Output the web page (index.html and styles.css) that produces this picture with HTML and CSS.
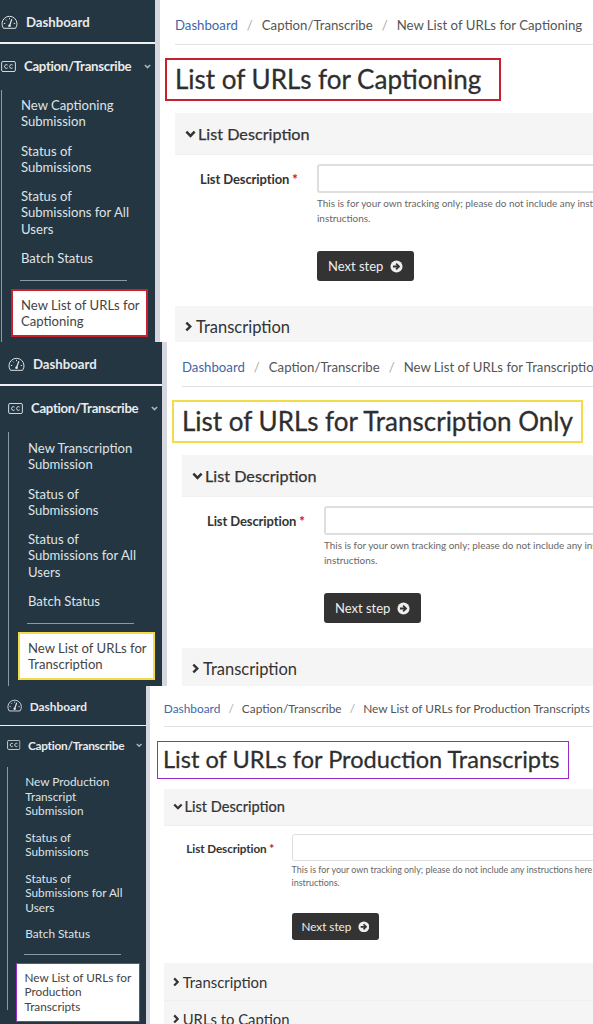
FILE: index.html
```html
<!DOCTYPE html>
<html lang="en">
<head>
  <meta charset="UTF-8">
  <meta name="viewport" content="width=device-width, initial-scale=1.0">
  <title>List of URLs</title>
  <link rel="stylesheet" href="styles.css">
</head>
<body>
  <svg class="sprite" xmlns="http://www.w3.org/2000/svg">
    <symbol id="gauge" viewBox="0 0 18 16">
      <path d="M2.6 14.2A8 8 0 1 1 15.4 14.2Z" fill="none" stroke="currentColor" stroke-width="1"/>
      <path d="M9 11.5 11.5 4.5" stroke="currentColor" stroke-width="1.3"/>
      <circle cx="9" cy="11.5" r="1.4" fill="currentColor"/>
      <path d="M3 9h1.5M13.5 9H15M5 4.8l1 1M9 3v1.5" stroke="currentColor" stroke-width="1"/>
    </symbol>
    <symbol id="cc" viewBox="0 0 16 12">
      <rect x=".5" y=".5" width="15" height="11" rx="1.5" fill="none" stroke="currentColor"/>
      <path d="M7 4.5A2 2 0 1 0 7 7.5M12.5 4.5A2 2 0 1 0 12.5 7.5" fill="none" stroke="currentColor"/>
    </symbol>
    <symbol id="down" viewBox="0 0 12 8">
      <path d="M1.5 1.5 6 6l4.5-4.5" fill="none" stroke="currentColor" stroke-width="2.8"/>
    </symbol>
    <symbol id="right" viewBox="0 0 8 12">
      <path d="M1.5 1.5 6 6l-4.5 4.5" fill="none" stroke="currentColor" stroke-width="2.8"/>
    </symbol>
    <symbol id="go" viewBox="0 0 14 14">
      <circle cx="7" cy="7" r="6.5" fill="currentColor"/>
      <path d="M3.2 7h6M6.6 3.9 9.7 7l-3.1 3.1" fill="none" stroke="#333" stroke-width="1.9"/>
    </symbol>
  </svg>

  <!-- Captioning -->
  <section class="panel panel-captioning">
    <aside class="sidebar">
      <a class="side-link side-dashboard"><svg class="side-icon"><use href="#gauge"/></svg>Dashboard</a>
      <a class="side-link side-group"><svg class="side-icon side-icon-cc"><use href="#cc"/></svg>Caption/Transcribe<svg class="side-caret"><use href="#down"/></svg></a>
      <ul class="tree">
        <li>New Captioning Submission</li>
        <li>Status of Submissions</li>
        <li>Status of Submissions for All Users</li>
        <li class="tree-last">Batch Status</li>
        <li class="tree-current">New List of URLs for Captioning</li>
      </ul>
    </aside>
    <main class="content">
      <nav class="crumbs"><a>Dashboard</a><i>/</i><span>Caption/Transcribe</span><i>/</i><span>New List of URLs for Captioning</span></nav>
      <h1 class="title">List of URLs for Captioning</h1>
      <h2 class="section-head section-open"><svg><use href="#down"/></svg>List Description</h2>
      <div class="form-row">
        <label class="form-label">List Description <b>*</b></label>
        <div class="form-field">
          <input class="form-input" type="text">
          <p class="help">This is for your own tracking only; please do not include any instructions here -<br>instructions.</p>
          <button class="next-btn">Next step<svg><use href="#go"/></svg></button>
        </div>
      </div>
      <h2 class="section-head"><svg class="chev-right"><use href="#right"/></svg>Transcription</h2>
    </main>
  </section>

  <!-- Transcription -->
  <section class="panel panel-transcription">
    <aside class="sidebar">
      <a class="side-link side-dashboard"><svg class="side-icon"><use href="#gauge"/></svg>Dashboard</a>
      <a class="side-link side-group"><svg class="side-icon side-icon-cc"><use href="#cc"/></svg>Caption/Transcribe<svg class="side-caret"><use href="#down"/></svg></a>
      <ul class="tree">
        <li>New Transcription Submission</li>
        <li>Status of Submissions</li>
        <li>Status of Submissions for All Users</li>
        <li class="tree-last">Batch Status</li>
        <li class="tree-current">New List of URLs for Transcription</li>
      </ul>
    </aside>
    <main class="content">
      <nav class="crumbs"><a>Dashboard</a><i>/</i><span>Caption/Transcribe</span><i>/</i><span>New List of URLs for Transcription</span></nav>
      <h1 class="title">List of URLs for Transcription Only</h1>
      <h2 class="section-head section-open"><svg><use href="#down"/></svg>List Description</h2>
      <div class="form-row">
        <label class="form-label">List Description <b>*</b></label>
        <div class="form-field">
          <input class="form-input" type="text">
          <p class="help">This is for your own tracking only; please do not include any instructions here -<br>instructions.</p>
          <button class="next-btn">Next step<svg><use href="#go"/></svg></button>
        </div>
      </div>
      <h2 class="section-head"><svg class="chev-right"><use href="#right"/></svg>Transcription</h2>
    </main>
  </section>

  <!-- Production transcripts -->
  <section class="panel panel-production">
    <aside class="sidebar">
      <a class="side-link side-dashboard"><svg class="side-icon"><use href="#gauge"/></svg>Dashboard</a>
      <a class="side-link side-group"><svg class="side-icon side-icon-cc"><use href="#cc"/></svg>Caption/Transcribe<svg class="side-caret"><use href="#down"/></svg></a>
      <ul class="tree">
        <li>New Production Transcript Submission</li>
        <li>Status of Submissions</li>
        <li>Status of Submissions for All Users</li>
        <li class="tree-last">Batch Status</li>
        <li class="tree-current">New List of URLs for Production Transcripts</li>
      </ul>
    </aside>
    <main class="content">
      <nav class="crumbs"><a>Dashboard</a><i>/</i><span>Caption/Transcribe</span><i>/</i><span>New List of URLs for Production Transcripts</span></nav>
      <h1 class="title">List of URLs for Production Transcripts</h1>
      <h2 class="section-head section-open"><svg><use href="#down"/></svg>List Description</h2>
      <div class="form-row">
        <label class="form-label">List Description <b>*</b></label>
        <div class="form-field">
          <input class="form-input" type="text">
          <p class="help">This is for your own tracking only; please do not include any instructions here -<br>instructions.</p>
          <button class="next-btn">Next step<svg><use href="#go"/></svg></button>
        </div>
      </div>
      <h2 class="section-head"><svg class="chev-right"><use href="#right"/></svg>Transcription</h2>
      <h2 class="section-head"><svg class="chev-right"><use href="#right"/></svg>URLs to Caption</h2>
    </main>
  </section>
</body>
</html>
```

FILE: styles.css
```css
* {
  box-sizing: border-box;
}

body {
  margin: 0;
  background: #fff;
  font-family: Lato, "Open Sans", sans-serif;
  color: #333;
  overflow: hidden;
}

.sprite {
  display: none;
}

/* Each panel is one cropped screenshot */
.panel {
  display: flex;
  overflow: hidden;
}

.panel-captioning {
  height: 342px;
  margin-left: -7px;
  --mark: #c8202f;
}

.panel-transcription {
  height: 344px;
  --mark: #f2dc4a;
}

.panel-production {
  height: 376px;
  zoom: 0.9;
  --mark: #9a2bc9;
}

/* Sidebar */
.sidebar {
  flex: 0 0 167px;
  min-width: 0;
  background: #243642;
  border-right: 5px solid #d6d7df;
  color: #e8eaec;
}

.side-link {
  display: flex;
  align-items: center;
  height: 44px;
  padding-left: 8px;
  font-size: 13.2px;
  font-weight: 700;
  white-space: nowrap;
}

.side-dashboard {
  padding-top: 2px;
  border-bottom: 2px solid #eef0f2;
}

.side-group {
  letter-spacing: -0.3px;
}

.side-icon {
  width: 17px;
  height: 15px;
  margin-right: 8px;
  flex: none;
}

.side-icon-cc {
  width: 15px;
  height: 11px;
  margin-right: 8px;
}

.side-caret {
  width: 7px;
  height: 5px;
  margin-left: auto;
  margin-right: 4px;
  opacity: 0.7;
}

.tree {
  list-style: none;
  margin: 2px 0 0 8px;
  padding: 8px 0 0 19px;
  border-left: 1px solid #8d98a2;
  height: 270px;
  font-size: 13.1px;
  line-height: 16.1px;
}

.panel-captioning .tree {
  padding-top: 7px;
}

.panel-production .tree {
  padding-top: 9px;
}

.tree li {
  margin-bottom: 13.5px;
  padding-right: 12px;
  color: #dfe3e6;
}

.tree .tree-last {
  position: relative;
  margin-bottom: 23px;
}

.tree .tree-last::after {
  content: "";
  position: absolute;
  left: -1px;
  width: 107px;
  bottom: -15px;
  border-top: 1px solid #8d98a2;
}

.tree .tree-current {
  background: #fff;
  color: #444;
  width: 137px;
  margin-left: -10px;
  padding: 6px 4px 6px 8px;
  border: 2px solid var(--mark);
}

.panel-production .tree .tree-current {
  padding: 8px 4px 8px 8px;
}

/* Main column */
.content {
  flex: 1;
  min-width: 0;
  overflow: hidden;
  padding-left: 15px;
}

.crumbs {
  display: flex;
  align-items: center;
  height: 45px;
  padding-top: 5px;
  border-bottom: 1px solid #e2e2e2;
  font-size: 13.2px;
  color: #555;
  white-space: nowrap;
}

.crumbs a {
  color: #3d67a8;
}

.crumbs i {
  margin: 0 9px;
  font-style: normal;
  color: #aaa;
}

.title {
  display: inline-block;
  margin: 13px 0 12px -10px;
  padding: 0 8px;
  height: 43px;
  border: 2px solid var(--mark);
  font-size: 26px;
  font-weight: 400;
  line-height: 39px;
  color: #2e2e2e;
  white-space: nowrap;
  -webkit-text-stroke: 0.3px #333;
}

.panel-captioning .title {
  padding-right: 18px;
}

.panel-production .title {
  height: 42px;
  line-height: 38px;
  margin: 16px 0 11px -8px;
  padding: 0 9px 0 6px;
  font-size: 26.2px;
}

.section-head {
  display: flex;
  align-items: center;
  height: 42px;
  margin: 0;
  background: #f5f5f5;
  border-bottom: 1px solid #efefef;
  padding-left: 10px;
  font-size: 16.5px;
  font-weight: 400;
  white-space: nowrap;
}

.section-head svg {
  width: 11px;
  height: 8px;
  margin-right: 2px;
}

.section-head .chev-right {
  width: 7px;
  height: 11px;
  margin-right: 4px;
}

.section-open {
  font-size: 16.2px;
  -webkit-text-stroke: 0.25px #333;
}

.form-row {
  display: flex;
  height: 151px;
  padding-top: 9px;
}

.panel-production .form-row {
  height: 152px;
}

.form-label {
  flex: 0 0 142px;
  padding: 7px 0 0 25px;
  font-size: 13px;
  font-weight: 700;
  letter-spacing: -0.1px;
  white-space: nowrap;
}

.form-label b {
  color: #c8202f;
}

.form-field {
  flex: none;
  width: 500px;
}

.form-input {
  display: block;
  width: 100%;
  height: 29px;
  border: 2px solid #dedede;
  border-radius: 3px;
  background: #fff;
}

.help {
  margin: 3px 0 0;
  font-size: 9.9px;
  line-height: 14.6px;
  color: #666;
  white-space: nowrap;
}

.next-btn {
  display: flex;
  align-items: center;
  height: 30px;
  margin-top: 26px;
  padding: 0 11px;
  border: none;
  border-radius: 3px;
  background: #333;
  color: #eee;
  font: 13px Lato, sans-serif;
}

.next-btn svg {
  width: 13px;
  height: 13px;
  margin-left: 7px;
}
```
